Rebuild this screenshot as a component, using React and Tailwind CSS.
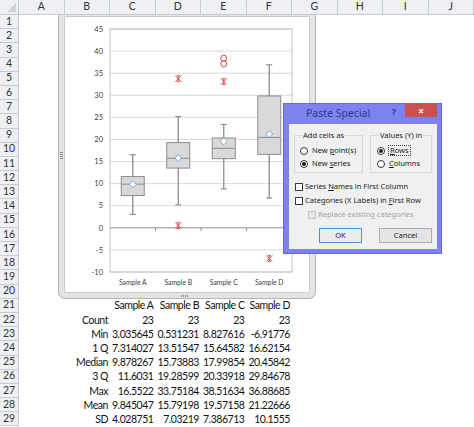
import React from 'react';

const cols = ['A', 'B', 'C', 'D', 'E', 'F', 'G', 'H', 'I', 'J'];

// column index: 0 = A, 1 = B ...
const data = {
  21: ['', '', 'Sample A', 'Sample B', 'Sample C', 'Sample D'],
  22: ['', 'Count', '23', '23', '23', '23'],
  23: ['', 'Min', '3.035645', '0.531231', '8.827616', '-6.91776'],
  24: ['', '1 Q', '7.314027', '13.51547', '15.64582', '16.62154'],
  25: ['', 'Median', '9.878267', '15.73883', '17.99854', '20.45842'],
  26: ['', '3 Q', '11.6031', '19.28599', '20.33918', '29.84678'],
  27: ['', 'Max', '16.5522', '33.75184', '38.51634', '36.88685'],
  28: ['', 'Mean', '9.845047', '15.79198', '19.57158', '21.22666'],
  29: ['', 'SD', '4.028751', '7.03219', '7.386713', '10.1555'],
};

const Y = (v) => 29 + ((45 - v) * 243) / 55;

const series = [
  { name: 'Sample A', cx: 132.75, lo: 3.04, q1: 7.31, med: 9.88, q3: 11.6, hi: 16.55, mean: 9.85, stars: [], circles: [] },
  { name: 'Sample B', cx: 178.25, lo: 5.2, q1: 13.52, med: 15.74, q3: 19.29, hi: 25.2, mean: 15.79, stars: [33.75, 0.53], circles: [] },
  { name: 'Sample C', cx: 223.75, lo: 8.83, q1: 15.65, med: 18.0, q3: 20.34, hi: 23.4, mean: 19.57, stars: [33.1], circles: [38.4, 37.1] },
  { name: 'Sample D', cx: 269.25, lo: 6.75, q1: 16.62, med: 20.46, q3: 29.85, hi: 36.89, mean: 21.23, stars: [-6.92], circles: [] },
];

const ticks = [45, 40, 35, 30, 25, 20, 15, 10, 5, 0, -5, -10];

function Sheet() {
  const cells = [];
  cells.push(
    <div key="corner" className="relative z-10 flex items-end justify-end border-r border-b border-[#c5cad3] bg-[#eef0f3] p-[2px]">
      <svg width="9" height="9" viewBox="0 0 9 9">
        <polygon points="9,0 9,9 0,9" fill="#d0d4da" />
      </svg>
    </div>
  );
  cols.forEach((c) =>
    cells.push(
      <div key={c} className="relative z-10 flex items-center justify-center border-r border-b border-[#c5cad3] bg-[#eef0f3] text-[10.5px] text-[#333]">
        {c}
      </div>
    )
  );
  for (let r = 1; r <= 29; r++) {
    cells.push(
      <div key={'r' + r} className="flex items-center justify-center border-r border-b border-[#c5cad3] bg-[#eef0f3] text-[10.5px] text-[#333]">
        {r}
      </div>
    );
    for (let c = 0; c < 10; c++) {
      const v = data[r] ? data[r][c] || '' : '';
      cells.push(
        <div key={r + '-' + c} className="flex items-center justify-end whitespace-nowrap pr-[2px] pt-[1px] text-[10.5px] tracking-[-0.45px] text-[#111]">
          {v}
        </div>
      );
    }
  }
  return <div className="grid grid-cols-[19px_repeat(10,45.5px)] grid-rows-[15px_repeat(29,14.2px)]">{cells}</div>;
}

function Star({ x, y }) {
  const s = 3;
  return (
    <g stroke="#e5484d" strokeWidth="1">
      <line x1={x - s} y1={y - s} x2={x + s} y2={y + s} />
      <line x1={x - s} y1={y + s} x2={x + s} y2={y - s} />
      <line x1={x} y1={y - s} x2={x} y2={y + s} />
      <line x1={x - 1.5} y1={y - s} x2={x + 1.5} y2={y - s} />
      <line x1={x - 1.5} y1={y + s} x2={x + 1.5} y2={y + s} />
    </g>
  );
}

function BoxPlot() {
  return (
    <svg width="246" height="277" viewBox="64 16 246 277" className="block">
      {ticks.map((t) => (
        <line key={t} x1="110" x2="292" y1={Y(t)} y2={Y(t)} stroke={t === 0 ? '#8c8c8c' : '#d9d9d9'} strokeWidth="1" />
      ))}
      <rect x="110" y="29" width="182" height="243" fill="none" stroke="#c4c4c4" strokeWidth="1" />
      {[155.5, 201, 246.5].map((x) => (
        <line key={x} x1={x} x2={x} y1={Y(0)} y2={Y(0) + 3} stroke="#8c8c8c" strokeWidth="1" />
      ))}
      {ticks.map((t) => (
        <text key={'l' + t} x="103" y={Y(t) + 2.7} textAnchor="end" fontSize="7.5" fill="#404040" fontFamily="Lato, sans-serif">
          {t}
        </text>
      ))}
      {series.map((s) => {
        const w = 23;
        const cap = 3;
        return (
          <g key={s.name}>
            <line x1={s.cx} x2={s.cx} y1={Y(s.hi)} y2={Y(s.q3)} stroke="#8d8d8d" strokeWidth="1.3" />
            <line x1={s.cx} x2={s.cx} y1={Y(s.q1)} y2={Y(s.lo)} stroke="#8d8d8d" strokeWidth="1.3" />
            <line x1={s.cx - cap} x2={s.cx + cap} y1={Y(s.hi)} y2={Y(s.hi)} stroke="#8d8d8d" strokeWidth="1.2" />
            <line x1={s.cx - cap} x2={s.cx + cap} y1={Y(s.lo)} y2={Y(s.lo)} stroke="#8d8d8d" strokeWidth="1.2" />
            <rect x={s.cx - w / 2} y={Y(s.q3)} width={w} height={Y(s.q1) - Y(s.q3)} fill="#d9d9d9" stroke="#8d8d8d" strokeWidth="1" />
            <line x1={s.cx - w / 2} x2={s.cx + w / 2} y1={Y(s.med)} y2={Y(s.med)} stroke="#8d8d8d" strokeWidth="1" />
            <polygon
              points={`${s.cx},${Y(s.mean) - 3.5} ${s.cx + 3.5},${Y(s.mean)} ${s.cx},${Y(s.mean) + 3.5} ${s.cx - 3.5},${Y(s.mean)}`}
              fill="#ffffff"
              stroke="#6fa8dc"
              strokeWidth="1"
            />
            {s.stars.map((v) => (
              <Star key={v} x={s.cx} y={Y(v)} />
            ))}
            {s.circles.map((v) => (
              <circle key={v} cx={s.cx} cy={Y(v)} r="3" fill="none" stroke="#e5484d" strokeWidth="1" />
            ))}
            <text x={s.cx} y="285" textAnchor="middle" fontSize="6.8" fill="#404040" fontFamily="Lato, sans-serif">
              {s.name}
            </text>
          </g>
        );
      })}
    </svg>
  );
}

function ChartObject() {
  return (
    <div className="absolute left-[59px] top-[11px] h-[287px] w-[256px] rounded-[6px] border-[5px] border-[#e4e4e4] bg-white shadow-[0_0_0_1px_#b4b4b4,inset_0_0_0_1px_#c9c9c9]">
      <BoxPlot />
      <div className="absolute left-[-4px] top-[136px] flex flex-col gap-[1px]">
        {[0, 1, 2, 3].map((i) => (
          <span key={i} className="h-[1px] w-[3px] bg-[#8a8a8a]" />
        ))}
      </div>
      <div className="absolute bottom-[-4px] left-[117px] flex gap-[1px]">
        {[0, 1, 2, 3].map((i) => (
          <span key={i} className="h-[2px] w-[1px] bg-[#8a8a8a]" />
        ))}
      </div>
    </div>
  );
}

function Radio({ checked, children }) {
  return (
    <div className="flex h-[13px] items-center gap-[4px]">
      <span className="flex h-[8px] w-[8px] items-center justify-center rounded-full border border-[#3a3a3a] bg-white">
        {checked ? <span className="h-[4px] w-[4px] rounded-full bg-[#1e1e1e]" /> : null}
      </span>
      {children}
    </div>
  );
}

function Check({ disabled, children }) {
  return (
    <div className={'flex h-[14px] items-center gap-[2px] ' + (disabled ? 'ml-[13px] text-[#a3a3a3]' : '')}>
      <span className={'h-[8px] w-[8px] border ' + (disabled ? 'border-[#c4c4c4] bg-[#e6e6e6]' : 'border-[#3a3a3a] bg-white')} />
      <span>{children}</span>
    </div>
  );
}

function PasteSpecial() {
  return (
    <div className="absolute left-[283px] top-[103px] flex h-[151px] w-[159px] flex-col border border-[#6468dc] bg-[#7e82ef] font-['Noto_Sans',sans-serif] text-[7.5px] leading-none text-[#1a1a1a]">
      <div className="flex h-[20px] items-start">
        <span className="ml-[22px] mt-[4px] text-[10.5px] text-[#2c3a90]">Paste Special</span>
        <span className="ml-auto mt-[3px] text-[9px] font-bold text-[#2c3a90]">?</span>
        <span className="ml-[9px] mr-[4px] flex h-[13px] w-[32px] items-center justify-center bg-[#c9504f] text-[10px] font-bold text-white">
          ×
        </span>
      </div>
      <div className="mx-[5px] mb-[4px] mr-[4px] flex flex-1 flex-col bg-[#f0f0f0]">
        <div className="flex gap-[7px] pl-[5px] pt-[6px]">
          <fieldset className="w-[69px] border border-[#d8d8d8] pb-[2px] pl-[5px]">
            <legend className="ml-[2px] px-[1px] leading-[10px]">Add cells as</legend>
            <div className="pt-[4px]">
              <Radio>
                <span>
                  New <u>p</u>oint(s)
                </span>
              </Radio>
              <Radio checked>
                <span>
                  New <u>s</u>eries
                </span>
              </Radio>
            </div>
          </fieldset>
          <fieldset className="w-[62px] border border-[#d8d8d8] pb-[2px] pl-[6px]">
            <legend className="ml-[2px] px-[1px] leading-[10px]">Values (Y) in</legend>
            <div className="pt-[4px]">
              <Radio checked>
                <span className="-ml-[1px] border border-dotted border-[#333] px-[1px] py-[1px]">
                  <u>R</u>ows
                </span>
              </Radio>
              <Radio>
                <span>
                  <u>C</u>olumns
                </span>
              </Radio>
            </div>
          </fieldset>
        </div>
        <div className="mt-[7px] flex flex-col pl-[6px]">
          <Check>
            Series <u>N</u>ames in First Column
          </Check>
          <Check>
            Categories (X Labels) in <u>F</u>irst Row
          </Check>
          <Check disabled>Replace existing categories</Check>
        </div>
        <div className="mt-[6px] flex gap-[17px] pl-[30px]">
          <span className="flex h-[15px] w-[43px] items-center justify-center border border-[#4a90d6] bg-[#ececec]">OK</span>
          <span className="flex h-[15px] w-[53px] items-center justify-center border border-[#adadad] bg-[#e5e5e5]">Cancel</span>
        </div>
      </div>
    </div>
  );
}

export default function App() {
  return (
    <div className="relative h-[427px] w-[474px] overflow-hidden bg-white font-['Lato',sans-serif]">
      <Sheet />
      <ChartObject />
      <PasteSpecial />
    </div>
  );
}
